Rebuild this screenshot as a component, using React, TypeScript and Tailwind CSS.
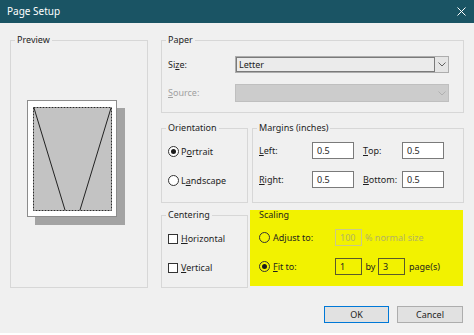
import React from 'react'

function U({ children }: { children: React.ReactNode }) {
  return <span className="underline underline-offset-[1px] decoration-[1px]">{children}</span>
}

function Group({ title, className, children }: { title: string; className: string; children?: React.ReactNode }) {
  return (
    <fieldset className={`border border-[#d7d7d7] ${className}`}>
      <legend className="ml-[4px] px-[2px] leading-[12px]">{title}</legend>
      {children}
    </fieldset>
  )
}

function Radio({ checked, yellow }: { checked?: boolean; yellow?: boolean }) {
  return (
    <span
      className={`flex h-[11px] w-[11px] shrink-0 items-center justify-center rounded-full border border-[#333333] ${
        yellow ? 'bg-transparent' : 'bg-white'
      }`}
    >
      {checked && <span className="h-[5px] w-[5px] rounded-full bg-[#1a1a1a]" />}
    </span>
  )
}

function Check() {
  return <span className="h-[10px] w-[10px] shrink-0 border border-[#333333] bg-white" />
}

function Field({ value, className }: { value: string; className: string }) {
  return <div className={`flex h-[17px] items-center border border-[#7a7a7a] bg-white pl-[4px] ${className}`}>{value}</div>
}

function Chevron({ color }: { color: string }) {
  return (
    <svg width="8" height="5" viewBox="0 0 8 5">
      <polyline points="0.5,0.5 4,4 7.5,0.5" fill="none" stroke={color} strokeWidth="1" />
    </svg>
  )
}

function PagePreview() {
  return (
    <svg width="98" height="125" viewBox="0 0 98 125" className="ml-[16px] mt-[54px]">
      <rect x="8" y="8" width="90" height="117" fill="#a3a3a3" />
      <rect x="0.5" y="0.5" width="89" height="116" fill="#ffffff" stroke="#8c8c8c" />
      <rect x="6.5" y="7.5" width="78" height="103" fill="#c3c3c3" stroke="#2b2b2b" strokeDasharray="2 1" />
      <line x1="7" y1="8" x2="38" y2="110" stroke="#222" strokeWidth="1" />
      <line x1="84" y1="8" x2="53" y2="110" stroke="#222" strokeWidth="1" />
    </svg>
  )
}

export default function App() {
  return (
    <div className="flex h-[335px] w-[474px] flex-col overflow-hidden bg-[#f0f0f0] font-['Noto_Sans',sans-serif] text-[9px] text-[#1e1e1e]">
      <div className="flex h-[23px] shrink-0 items-center justify-between bg-[#1a5464] pl-[7px] pr-[8px] text-[10px] text-white">
        <span>Page Setup</span>
        <svg width="9" height="9" viewBox="0 0 9 9">
          <path d="M0.5 0.5 L8.5 8.5 M8.5 0.5 L0.5 8.5" stroke="#ffffff" strokeWidth="1" />
        </svg>
      </div>

      <div className="flex gap-[13px] pl-[10px] pt-[11px]">
        <Group title="Preview" className="h-[254px] w-[138px]">
          <PagePreview />
        </Group>

        <div className="flex w-[303px] flex-col">
          <Group title="Paper" className="h-[79px]">
            <div className="mt-[10px] flex h-[17px] items-center pl-[6px]">
              <span className="w-[67px]">
                Si<U>z</U>e:
              </span>
              <div className="flex h-[17px] w-[214px] border border-[#adadad] bg-[#e5e5e5]">
                <div className="flex flex-1 items-center border border-[#7a7a7a] bg-[#ebebeb] pl-[2px]">Letter</div>
                <div className="flex w-[13px] items-center justify-center">
                  <Chevron color="#606060" />
                </div>
              </div>
            </div>
            <div className="mt-[11px] flex h-[18px] items-center pl-[6px] text-[#a0a0a0]">
              <span className="w-[67px]">
                <U>S</U>ource:
              </span>
              <div className="flex h-[18px] w-[214px] justify-end border border-[#bfbfbf] bg-[#cccccc]">
                <div className="flex w-[13px] items-center justify-center">
                  <Chevron color="#b0b0b0" />
                </div>
              </div>
            </div>
          </Group>

          <div className="mt-[9px] flex gap-[4px]">
            <Group title="Orientation" className="h-[81px] w-[87px]">
              <div className="mt-[9px] flex flex-col gap-[12px] pl-[6px]">
                <div className="flex h-[17px] items-center gap-[2px]">
                  <Radio checked />
                  <span>
                    P<U>o</U>rtrait
                  </span>
                </div>
                <div className="flex h-[17px] items-center gap-[2px]">
                  <Radio />
                  <span>
                    L<U>a</U>ndscape
                  </span>
                </div>
              </div>
            </Group>

            <Group title="Margins (inches)" className="h-[81px] w-[212px]">
              <div className="mt-[8px] grid grid-cols-[53px_42px_48px_42px] gap-y-[12px] pl-[6px]">
                <span className="flex h-[17px] items-center">
                  <U>L</U>eft:
                </span>
                <Field value="0.5" className="" />
                <span className="flex h-[17px] items-center pl-[9px]">
                  <U>T</U>op:
                </span>
                <Field value="0.5" className="" />
                <span className="flex h-[17px] items-center">
                  <U>R</U>ight:
                </span>
                <Field value="0.5" className="" />
                <span className="flex h-[17px] items-center pl-[9px]">
                  <U>B</U>ottom:
                </span>
                <Field value="0.5" className="" />
              </div>
            </Group>
          </div>

          <div className="mt-[6px] flex gap-[2px]">
            <Group title="Centering" className="h-[79px] w-[87px]">
              <div className="mt-[9px] flex flex-col gap-[12px] pl-[6px]">
                <div className="flex h-[17px] items-center gap-[3px]">
                  <Check />
                  <span>
                    <U>H</U>orizontal
                  </span>
                </div>
                <div className="flex h-[17px] items-center gap-[3px]">
                  <Check />
                  <span>
                    <U>V</U>ertical
                  </span>
                </div>
              </div>
            </Group>

            <div className="mt-[1px] h-[76px] w-[213px] bg-[#f2f200] pl-[9px]">
              <div className="leading-[10px]">Scaling</div>
              <div className="mt-[9px] flex h-[17px] items-center">
                <div className="flex w-[76px] items-center gap-[3px]">
                  <Radio yellow />
                  <span>
                    Ad<U>j</U>ust to:
                  </span>
                </div>
                <div className="flex h-[17px] w-[27px] items-center border border-[#c9c98a] pl-[4px] text-[#b2b262]">100</div>
                <span className="ml-[3px] text-[#b2b262]">% normal size</span>
              </div>
              <div className="mt-[12px] flex h-[17px] items-center">
                <div className="flex w-[76px] items-center gap-[3px]">
                  <Radio checked yellow />
                  <span>
                    <U>F</U>it to:
                  </span>
                </div>
                <div className="flex h-[17px] w-[27px] items-center border border-[#5a5a2a] pl-[4px]">1</div>
                <span className="ml-[1px] w-[15px] text-center">by</span>
                <div className="flex h-[17px] w-[27px] items-center border border-[#5a5a2a] pl-[4px]">3</div>
                <span className="ml-[4px]">page(s)</span>
              </div>
            </div>
          </div>
        </div>
      </div>

      <div className="mt-[18px] flex justify-end gap-[8px] pr-[11px]">
        <button className="flex h-[17px] w-[65px] items-center justify-center border border-[#0078d7] bg-[#e1e1e1]">OK</button>
        <button className="flex h-[17px] w-[66px] items-center justify-center border border-[#adadad] bg-[#e1e1e1]">Cancel</button>
      </div>
      <div className="mt-auto h-[2px] bg-white" />
    </div>
  )
}
